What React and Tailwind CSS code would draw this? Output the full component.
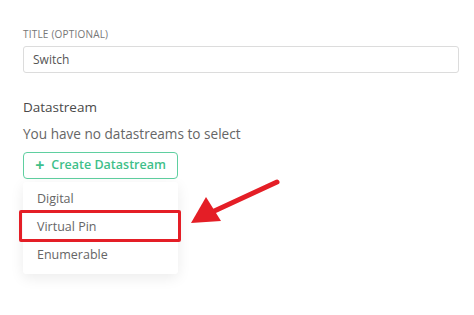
export default function App() {
  return (
    <div className="relative w-[474px] h-[315px] bg-white font-['Open_Sans',sans-serif] text-[#545454] overflow-hidden">
      <div className="pl-[23px] pr-[15px] pt-[28px]">
        <div className="text-[10px] tracking-[0.2px] text-[#777] leading-[12px]">TITLE (OPTIONAL)</div>
        <div className="mt-[6px] h-[27px] border border-[#dcdcdc] rounded-[3px] flex items-center pl-[9px] text-[12px] text-[#555]">
          Switch
        </div>
        <div className="mt-[25px] text-[13.5px] font-medium text-[#4a4a4a] leading-[18px]">Datastream</div>
        <div className="mt-[9px] text-[13.6px] text-[#666] leading-[18px]">You have no datastreams to select</div>
        <button className="mt-[9px] w-[155px] h-[27px] border border-[#5fcfa0] rounded-[4px] flex items-center justify-center gap-[7px] text-[12.5px] font-semibold text-[#3fbf8a]">
          <span className="text-[16px] font-bold leading-none -mt-[2px]">+</span>
          <span>Create Datastream</span>
        </button>
        <div className="relative mt-[3px] w-[155px] bg-white shadow-[0_4px_14px_rgba(0,0,0,0.08)] rounded-[3px] pt-[3px] pb-[5px] text-[12.5px] text-[#666]">
          <div className="h-[28px] flex items-center pl-[14px]">Digital</div>
          <div className="h-[28px] flex items-center pl-[14px]">Virtual Pin</div>
          <div className="h-[28px] flex items-center pl-[14px]">Enumerable</div>
          <div className="absolute left-[-4px] top-[28px] w-[162px] h-[32px] border-[3px] border-[#e41e26] rounded-[2px]" />
        </div>
      </div>
      <svg className="absolute left-0 top-0" width="474" height="315" viewBox="0 0 474 315">
        <line x1="277" y1="182" x2="210" y2="213" stroke="#e41e26" strokeWidth="5" strokeLinecap="round" />
        <polygon points="191,223 206,197 221,221" fill="#e41e26" />
      </svg>
    </div>
  );
}
